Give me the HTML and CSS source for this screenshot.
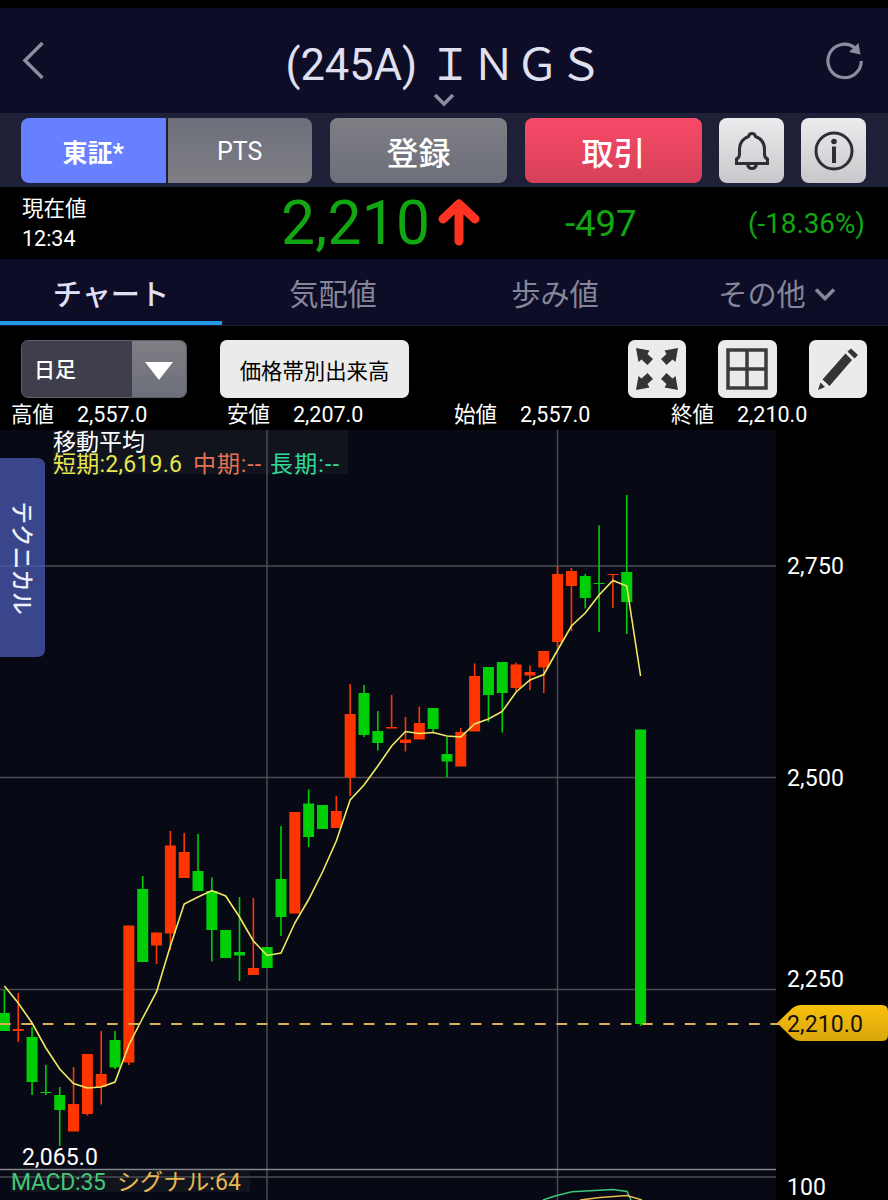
FILE: index.html
```html
<!DOCTYPE html>
<html lang="ja">
<head>
    <meta charset="UTF-8">
    <meta name="viewport" content="width=device-width, initial-scale=1.0">
    <title>(245A) ＩＮＧＳ</title>
    <link rel="stylesheet" href="styles.css">
</head>
<body>
    <!-- タイトル -->
    <header class="header">
        <svg class="back" width="24" height="40" viewBox="0 0 24 40"><path d="M21.5 2 L4 19.5 L21.5 37"/></svg>
        <div class="title">
            <h1><span class="code">(245A)</span><span class="name">ＩＮＧＳ</span></h1>
            <svg width="22" height="14" viewBox="0 0 22 14"><path d="M2 2 L11 11 L20 2"/></svg>
        </div>
        <svg class="reload" width="38" height="40" viewBox="0 0 38 40">
            <path class="ring" d="M35.3 20 A16.7 16.7 0 1 1 28.5 6.5"/>
            <path class="head" d="M32.5 2 L34.5 13.5 L23 11 Z"/>
        </svg>
    </header>

    <!-- ボタン -->
    <div class="actions">
        <div class="market">
            <button class="on">東証*</button>
            <button>PTS</button>
        </div>
        <button class="btn regist">登録</button>
        <button class="btn trade">取引</button>
        <button class="btn icon">
            <svg width="38" height="40" viewBox="0 0 38 40">
                <path d="M15.5 5.5 Q16 2.5 19 2.5 Q22 2.5 22.5 5.5 Q31.5 9 31.5 18 V23 Q31.5 27 34.5 28 V32.5 H3.5 V28 Q6.5 27 6.5 23 V18 Q6.5 9 15.5 5.5 Z"/>
                <path d="M14.5 32.5 Q15 37.5 19 37.5 Q23 37.5 23.5 32.5"/>
            </svg>
        </button>
        <button class="btn icon">
            <svg width="40" height="40" viewBox="0 0 40 40">
                <circle cx="20" cy="20" r="18"/>
                <circle class="fill" cx="20" cy="10.5" r="2.8"/>
                <path class="bar" d="M20 15.5 V32"/>
            </svg>
        </button>
    </div>

    <!-- 現在値 -->
    <div class="price">
        <div class="label">現在値<br>12:34</div>
        <div class="now">2,210</div>
        <svg class="arrow" width="42" height="50" viewBox="0 0 42 50"><path d="M21 43 V7 M5 21 L21 6 L37 21"/></svg>
        <div class="diff">-497</div>
        <div class="rate">(-18.36%)</div>
    </div>

    <nav class="tabs">
        <a class="active">チャート</a>
        <a>気配値</a>
        <a>歩み値</a>
        <a>その他<svg width="22" height="15" viewBox="0 0 22 15"><path d="M2 2.5 L11 11.5 L20 2.5"/></svg></a>
    </nav>

    <div class="toolbar">
        <div class="select"><span>日足</span><i><svg width="28" height="18" viewBox="0 0 28 18"><path d="M0 0 H28 L14 18 Z"/></svg></i></div>
        <button class="volume">価格帯別出来高</button>
        <div class="tools">
            <button>
                <svg width="58" height="58" viewBox="0 0 58 58">
                    <g id="corner"><path d="M8 8 L21.5 10.5 L19.5 14 L25 19 L19.5 25 L13.5 19.5 L10.5 22 Z"/></g>
                    <use href="#corner" transform="translate(58 0) scale(-1 1)"/>
                    <use href="#corner" transform="translate(0 58) scale(1 -1)"/>
                    <use href="#corner" transform="translate(58 58) scale(-1 -1)"/>
                </svg>
            </button>
            <button>
                <svg width="58" height="58" viewBox="0 0 58 58"><path class="grid4" d="M10 10 H48 V48 H10 Z M29 10 V48 M10 29 H48"/></svg>
            </button>
            <button>
                <svg width="58" height="58" viewBox="0 0 58 58">
                    <path d="M36.5 13.5 L43 20 L20.5 46 L13.5 39.5 Z M38.5 11.5 L42 8.500 L49 15 L45.5 18.5 Z M11.5 42.500 L16 47 L9 50 Z"/>
                </svg>
            </button>
        </div>
    </div>

    <div class="ohlc">
        <div><span>高値</span>2,557.0</div>
        <div><span>安値</span>2,207.0</div>
        <div><span>始値</span>2,557.0</div>
        <div><span>終値</span>2,210.0</div>
    </div>

    <!-- チャート -->
    <svg class="chart" width="888" height="770" viewBox="0 430 888 770">
        <defs>
            <linearGradient id="gold" x1="0" y1="0" x2="0" y2="1">
                <stop offset="0" stop-color="#f8c00c"/>
                <stop offset="1" stop-color="#d9a60c"/>
            </linearGradient>
        </defs>
        <rect class="plot" x="0" y="430" width="776" height="770"/>
        <rect class="legend-bg" x="53" y="430" width="295" height="44"/>
        <rect class="legend-bg" x="11" y="1171" width="239" height="21"/>
        <path class="grid" d="M267 430 V1200 M557.5 430 V1200 M0 566 H776 M0 777.5 H776 M0 989.5 H776 M0 1177 H776"/>
        <path class="border" d="M0 1169.5 H776"/>
        <g id="candles"></g>
        <path class="now-line" d="M0 1024 H780"/>
        <polyline id="average" class="average"/>
        <path class="macd" d="M543 1200 Q557 1195 572 1191.8 L613 1189.5 L627 1191.5 L631 1200"/>
        <path class="signal" d="M580 1200 L600 1197.5 L627 1195.5 L642 1200"/>

        <text class="white" x="53" y="449.5">移動平均</text>
        <text class="yellow" x="53" y="472" textLength="129">短期:2,619.6</text>
        <text class="orange" x="193" y="472" textLength="68">中期:--</text>
        <text class="mint" x="270" y="472" textLength="69">長期:--</text>
        <text class="white" x="22" y="1165" textLength="76">2,065.0</text>
        <text class="green" x="11" y="1190" textLength="95">MACD:35</text>
        <text class="sand" x="117" y="1190" textLength="124">シグナル:64</text>

        <text class="white" x="787" y="574" textLength="57">2,750</text>
        <text class="white" x="787" y="785.5" textLength="57">2,500</text>
        <text class="white" x="787" y="987" textLength="57">2,250</text>
        <text class="white" x="787" y="1195" textLength="39">100</text>
        <path class="tag" d="M777 1023 L792 1008.5 Q796 1005 801 1005 H882 Q888 1005 888 1011 V1035 Q888 1041 882 1041 H801 Q796 1041 792 1037.5 Z"/>
        <text class="black" x="787" y="1031.5" textLength="76">2,210.0</text>

        <path class="side" d="M0 458 H37 Q45 458 45 466 V649 Q45 657 37 657 H0 Z"/>
        <path class="side-line" d="M0 566 H45"/>
        <text class="side-text" transform="translate(14 501.5) rotate(90)" textLength="113">テクニカル</text>
    </svg>

    <script>
        // [上昇(r)/下降(g), 実体上, 実体下, 高値, 安値, 移動平均]
        const candles = [
            ["g", 1013, 1031, 990, 1031, 986],
            ["r", 1029, 1031, 993, 1042, 1003],
            ["g", 1037, 1082, 1027, 1095, 1023],
            ["g", 1092, 1093, 1065, 1095, 1048],
            ["g", 1095, 1110, 1087, 1146, 1069],
            ["r", 1104, 1131.5, 1067, 1131, 1083.5],
            ["r", 1054, 1114, 1054, 1115.5, 1088],
            ["r", 1074, 1087, 1031, 1104.5, 1087],
            ["g", 1040, 1067.5, 1031, 1069, 1082],
            ["r", 925.5, 1062.5, 925.5, 1065, 1045],
            ["g", 889, 962, 876, 962, 1018],
            ["r", 932.5, 945.5, 932.5, 964, 992],
            ["r", 845.5, 933.5, 831, 950, 946],
            ["r", 852, 878, 833, 878, 904],
            ["g", 871, 891, 834, 891, 897],
            ["g", 891, 930, 877.5, 961.5, 890.5],
            ["g", 930, 958, 930, 958, 896],
            ["g", 952, 955.5, 897, 981, 917],
            ["r", 968, 975, 898, 975, 941],
            ["g", 947, 968, 947, 968, 955.5],
            ["g", 879, 917, 826, 936, 953],
            ["r", 812, 913.5, 812, 913, 923],
            ["g", 803.5, 837, 789.5, 847, 899.5],
            ["g", 805, 829, 805, 829, 872],
            ["r", 811, 828, 796, 828, 841],
            ["r", 714, 777.5, 684, 796, 800],
            ["g", 693, 735, 685, 737, 785],
            ["g", 731, 743, 711, 750.5, 766],
            ["r", 727, 728.5, 695, 728, 746],
            ["r", 739.5, 743, 717, 751.5, 731.5],
            ["r", 723, 739.5, 706.5, 739, 733.5],
            ["g", 708, 729, 708, 732, 732.5],
            ["g", 754, 761.5, 737, 777, 736],
            ["r", 732, 766.5, 728, 766, 737],
            ["r", 676, 731.5, 663.5, 731, 724],
            ["g", 667, 695, 667, 722, 719],
            ["g", 662, 693, 662, 732.5, 711.5],
            ["r", 664.5, 688, 662.5, 691, 692],
            ["r", 672, 675.5, 665.5, 690, 680],
            ["r", 651, 667.5, 651, 693, 674.5],
            ["r", 574, 642, 566, 647, 650],
            ["r", 571, 586, 568, 631, 626],
            ["g", 576, 598, 574, 608.5, 613],
            ["g", 583, 584, 525.5, 632, 595],
            ["r", 574, 575, 574, 608, 580.5],
            ["g", 572, 602, 495, 634, 586],
            ["g", 729.5, 1024, 729.5, 1026, 676]
        ];

        let bars = "";
        const points = [];
        candles.forEach(([type, top, bottom, high, low, avg], i) => {
            const x = 4.4 + i * 13.83;
            bars += `<g class="${type}"><rect x="${x - 0.8}" y="${high}" width="1.6" height="${low - high}"/>` +
                    `<rect x="${x - 5.5}" y="${top}" width="11" height="${bottom - top}"/></g>`;
            points.push(`${x},${avg}`);
        });
        document.getElementById("candles").innerHTML = bars;
        document.getElementById("average").setAttribute("points", points.join(" "));
    </script>
</body>
</html>
```
FILE: styles.css
```css
* {
    box-sizing: border-box;
}

body {
    margin: 0;
    padding-top: 8px;
    width: 888px;
    height: 1200px;
    overflow: hidden;
    background-color: #000;
    color: #fff;
    font-family: Roboto, "Noto Sans CJK JP", sans-serif;
}

button {
    border: none;
    padding: 0;
    font-family: inherit;
    color: #fff;
}

svg {
    display: block;
    flex: none;
}

.header {
    height: 105px;
    padding: 0 24px 0 21px;
    display: grid;
    grid-template-columns: 38px 1fr 38px;
    background-color: #0d0d28;
}

.header path {
    fill: none;
    stroke: #8c8c9e;
    stroke-width: 3.5;
}

.back {
    margin-top: 33px;
}

.reload {
    margin-top: 33px;
}

.header .reload .ring {
    stroke-width: 3.2;
}

.header .reload .head {
    fill: #8c8c9e;
    stroke: none;
}

.title {
    display: flex;
    flex-direction: column;
    align-items: center;
    padding-left: 3px;
}

.title h1 {
    display: flex;
    margin: 28px 0 0;
    height: 57px;
    line-height: 60px;
    font-weight: normal;
    color: #e0e0f0;
}

.code {
    width: 143px;
    font-size: 43.5px;
}

.name {
    font-size: 43.5px;
}

.actions {
    height: 74px;
    padding: 5px 21px 4px;
    display: flex;
    background-color: #1e2038;
}

.market {
    display: flex;
    gap: 2px;
    width: 291px;
    margin-right: 18px;
    border-radius: 8px;
    overflow: hidden;
}

.market button {
    flex: 1;
    font-size: 25px;
    padding-top: 2px;
    background: linear-gradient(#6d6f7a, #7e7e84);
}

.market .on {
    padding-top: 0;
    font-weight: bold;
    background: #6680ff;
}

.btn {
    height: 65px;
    border-radius: 8px;
    font-size: 32px;
    font-weight: 500;
}

.regist {
    width: 177px;
    margin-right: 18px;
    background: linear-gradient(#7e7e84, #6d6f7a);
}

.trade {
    width: 177px;
    margin-right: 17px;
    background: linear-gradient(#f84a68, #d54058);
}

.icon {
    width: 65px;
    margin-right: 17px;
    display: flex;
    align-items: center;
    justify-content: center;
    background: linear-gradient(#ececee, #c8c8cc);
}

.icon:last-child {
    margin-right: 0;
}

.icon svg {
    fill: none;
    stroke: #2d3033;
    stroke-width: 3;
}

.icon .fill {
    fill: #2d3033;
    stroke: none;
}

.icon .bar {
    stroke-width: 4;
}

.price {
    height: 72px;
    padding: 0 23px 0 22px;
    display: flex;
    align-items: center;
    color: #12a612;
}

.label {
    width: 259px;
    padding-top: 2px;
    font-size: 21.5px;
    line-height: 30px;
    color: #fff;
}

.now {
    width: 157px;
    font-size: 60.5px;
    letter-spacing: 0.3px;
    white-space: nowrap;
}

.arrow {
    fill: none;
    stroke: #ff3322;
    stroke-width: 9;
    stroke-linecap: round;
    stroke-linejoin: round;
}

.diff {
    margin-left: 85px;
    font-size: 36.5px;
}

.rate {
    margin-left: auto;
    font-size: 27.8px;
}

.tabs {
    height: 67px;
    display: flex;
    background-color: #0d0d28;
    border-bottom: 1px solid #1a1a2c;
}

.tabs a {
    flex: 1;
    display: flex;
    align-items: center;
    justify-content: center;
    padding-top: 4px;
    border-bottom: 4px solid transparent;
    font-size: 29.2px;
    color: #868699;
}

.tabs .active {
    border-color: #1f9be6;
    font-weight: 500;
    color: #e0e0f4;
}

.tabs svg {
    margin: 5px 0 0 8px;
    fill: none;
    stroke: #88889a;
    stroke-width: 3.5;
}

.toolbar {
    height: 72px;
    padding: 14px 21px 0;
    display: flex;
}

.toolbar button {
    height: 58px;
    border-radius: 7px;
    background-color: #ebebeb;
}

.select {
    width: 166px;
    height: 58px;
    margin-right: 33px;
    display: flex;
    border: 1px solid #5c5d68;
    border-radius: 7px;
    overflow: hidden;
    background-color: #3e3e4c;
    font-size: 21px;
    font-weight: 500;
    line-height: 59px;
}

.select span {
    flex: 1;
    padding-left: 12px;
}

.select i {
    width: 54px;
    padding-top: 4px;
    display: flex;
    align-items: center;
    justify-content: center;
    background: linear-gradient(#7e7e84, #6d6f7a);
}

.select path {
    fill: #fff;
}

.toolbar .volume {
    width: 189px;
    font-size: 21.4px;
    color: #000;
}

.tools {
    display: flex;
    gap: 32px;
    margin-left: auto;
}

.tools button {
    width: 58.5px;
}

.tools path {
    fill: #343434;
}

.tools .grid4 {
    fill: none;
    stroke: #3c3c3c;
    stroke-width: 3.5;
}

.ohlc {
    height: 32px;
    padding-left: 11px;
    display: grid;
    grid-template-columns: 216px 227px 217px 1fr;
    font-size: 21.5px;
    line-height: 34px;
}

.ohlc span {
    display: inline-block;
    width: 66px;
}

.chart {
    overflow: visible;
    font-size: 23px;
}

.plot {
    fill: #070915;
}

.legend-bg {
    fill: #11131d;
}

.grid {
    fill: none;
    stroke: #4c4d53;
    stroke-width: 1.5;
}

.border {
    stroke: #85868c;
    stroke-width: 1.5;
}

.r {
    fill: #ff3500;
}

.g {
    fill: #00ce06;
}

.now-line {
    stroke: #d8b155;
    stroke-width: 2;
    stroke-dasharray: 10.7 10.7;
}

.average {
    fill: none;
    stroke: #f0ea62;
    stroke-width: 1.6;
}

.macd {
    fill: none;
    stroke: #3cc878;
    stroke-width: 1.5;
}

.signal {
    fill: none;
    stroke: #e8b850;
    stroke-width: 1.5;
}

.white {
    fill: #fff;
}

.black {
    fill: #111;
}

.yellow {
    fill: #e6e650;
}

.orange {
    fill: #e47252;
}

.mint {
    fill: #2edc9a;
}

.green {
    fill: #40c878;
}

.sand {
    fill: #e6b854;
}

.tag {
    fill: url(#gold);
}

.side {
    fill: #39468c;
}

.side-line {
    stroke: #4c5899;
    stroke-width: 1.5;
}

.side-text {
    fill: #eef0fa;
    font-size: 22.6px;
    font-weight: 500;
}
```
